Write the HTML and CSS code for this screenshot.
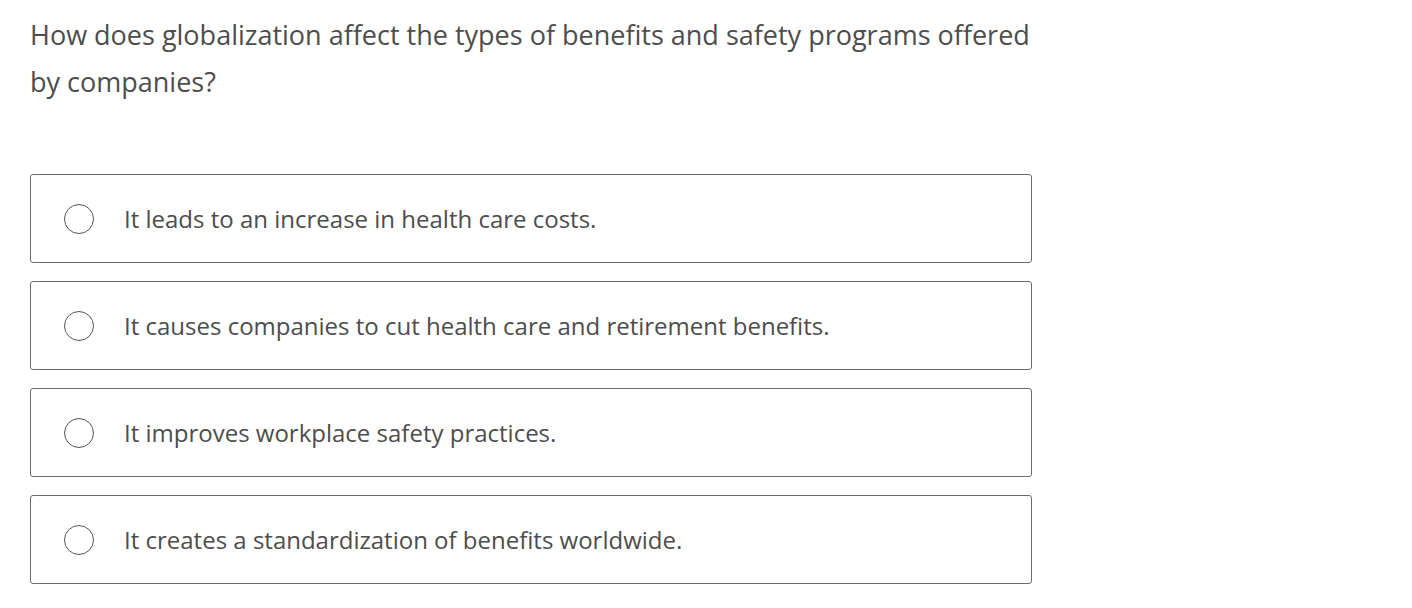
FILE: index.html
```html
<!DOCTYPE html>
<html>
<head>
<meta charset="utf-8">
<link rel="stylesheet" href="styles.css">
</head>
<body>
<div class="quiz">
  <p class="question">How does globalization affect the types of benefits and safety programs offered by companies?</p>
  <div class="options">
    <label class="option"><span class="radio"></span><span class="label">It leads to an increase in health care costs.</span></label>
    <label class="option"><span class="radio"></span><span class="label">It causes companies to cut health care and retirement benefits.</span></label>
    <label class="option"><span class="radio"></span><span class="label">It improves workplace safety practices.</span></label>
    <label class="option"><span class="radio"></span><span class="label">It creates a standardization of benefits worldwide.</span></label>
  </div>
</div>
</body>
</html>
```

FILE: styles.css
```css
html, body {
  margin: 0;
  padding: 0;
  background: #fff;
}
.quiz {
  padding: 11px 0 0 30px;
  width: 1002px;
  font-family: "Open Sans", "Liberation Sans", sans-serif;
  color: #4d4d4d;
}
.question {
  margin: 0;
  font-size: 27px;
  line-height: 47px;
  width: 1002px;
}
.options {
  margin-top: 69px;
  display: flex;
  flex-direction: column;
  gap: 18px;
}
.option {
  box-sizing: border-box;
  height: 89px;
  border: 1px solid #6b6b6b;
  border-radius: 3px;
  display: flex;
  align-items: center;
  padding-left: 33px;
}
.radio {
  box-sizing: border-box;
  width: 30px;
  height: 30px;
  border: 1px solid #555;
  border-radius: 50%;
  flex: none;
}
.label {
  margin-left: 30px;
  font-size: 24px;
  line-height: 30px;
}
```
